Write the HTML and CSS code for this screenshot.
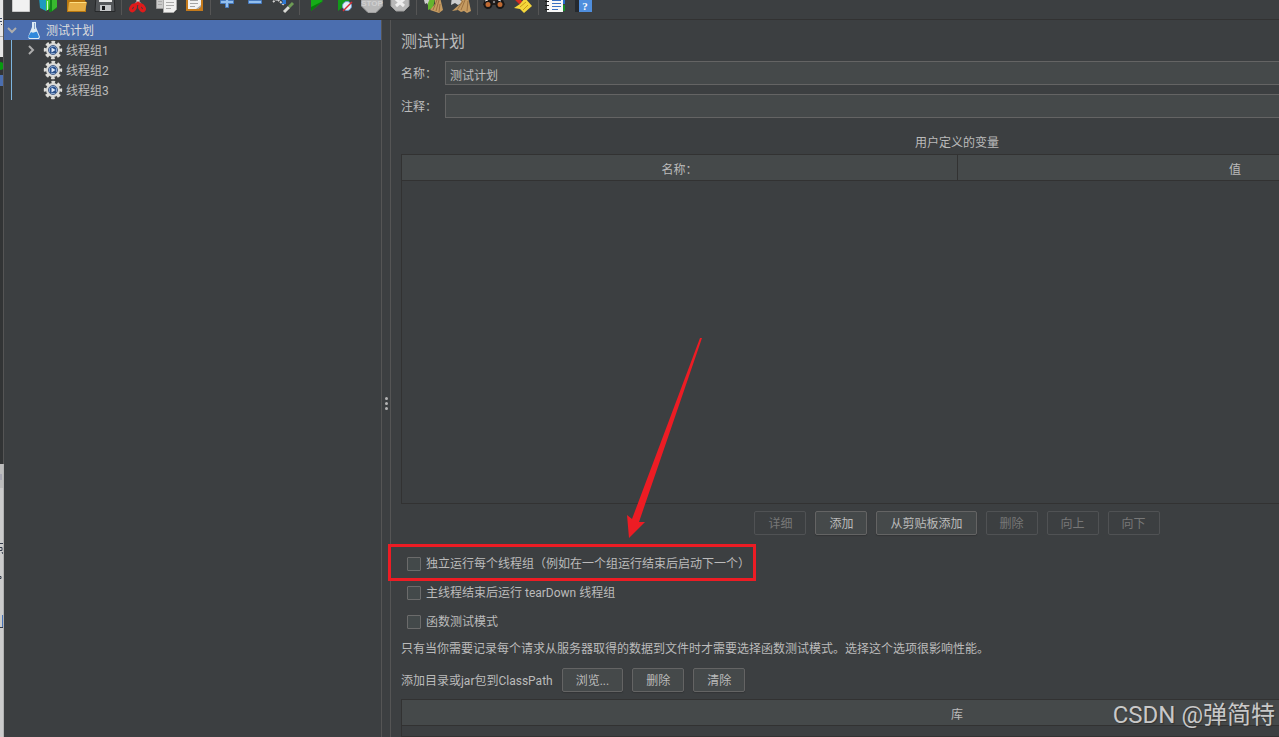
FILE: index.html
```html
<!DOCTYPE html>
<html lang="zh-CN">

<head>
    <meta charset="UTF-8">
    <meta name="viewport" content="width=device-width, initial-scale=1">
    <title>测试计划</title>
    <link rel="stylesheet" href="styles.css">
</head>

<body>
    <!-- shared tree icon -->
    <svg class="defs" width="0" height="0">
        <symbol id="gear" viewBox="0 0 20 20">
            <circle cx="10" cy="10" r="7" fill="#dcdcd9" />
            <circle cx="10" cy="10" r="7.700" fill="none" stroke="#dcdcd9" stroke-width="3" stroke-dasharray="3.500 2.548" stroke-dashoffset="1.750" />
            <circle cx="10" cy="10" r="4.500" fill="#8fb0dc" stroke="#4a5f85" />
            <path fill="#2c528c" d="M7 8a4 4 0 0 1 6 0v5H7z" />
            <path d="M8.500 7.500l4 2.500-4 2.500z" fill="#dfeafa" />
        </symbol>
    </svg>

    <!-- sliver of the window behind -->
    <aside class="behind">
        <svg width="4" height="737" viewBox="0 0 4 737">
            <path fill="#e6e6e6" d="M0 0h4v57H0z" />
            <path fill="#a8a8a8" d="M0 36h4v1H0z" />
            <path stroke="#3c4b68" d="M0 18.500h2M0 21.500h2M1 24.500h1" />
            <path fill="#323435" d="M0 57h4v407H0z" />
            <circle cx="0" cy="66" r="4" fill="#079a10" />
            <path fill="#4b6eaf" d="M0 75h4v11H0z" />
            <path fill="#bdbdbd" d="M0 464h4v24H0z" />
            <path stroke="#9292a8" d="M1 474v6" />
            <path stroke="#303848" fill="none" d="M0 543.500h3M0 547.500h2v3H0M2 552l1 2M0 576.500h1v2H0M0 627.500h3" />
            <path fill="#4773b8" d="M2 615h1v12H2z" />
            <path fill="#555" d="M3 0h1v464H3z" />
            <path fill="#b2b2b2" d="M3 464h1v273H3z" />
        </svg>
    </aside>

    <div class="app">
        <header class="toolbar">
            <button type="button" aria-label="新建"><svg viewBox="0 0 28 20"><path fill="#f1f1f1" stroke="#c9c9c9" d="M5.500-4h17v15.500h-17z" /></svg></button>
            <button type="button" aria-label="模板"><svg viewBox="0 0 28 20"><path fill="#1d9ac0" d="M4-2l7 2v11l-6-3z" /><path fill="#45d136" d="M11 0l5-2v10l-5 3z" /><path fill="#12851a" d="M15 0h7v8l-6 4h-2z" /><path fill="#39b92f" d="M17 0h5v7l-5 4z" /><path stroke="#c6f6d3" d="M12.500 1v9" /></svg></button>
            <button type="button" aria-label="打开"><svg viewBox="0 0 28 20"><path fill="#b87710" d="M4-3h16l3 5v10H4z" /><path fill="#e5ae45" d="M6 2h18l-2 9H5z" /><path stroke="#ffdf82" d="M7 2.500h16" /></svg></button>
            <button type="button" aria-label="保存"><svg viewBox="0 0 28 20"><path fill="#54575a" stroke="#27292b" d="M5-4h18l1 15.500H4z" /><path fill="#e8e8e8" d="M8-4h13v6H8z" /><path fill="#c5c7c9" d="M9 5h11v6H9z" /><path fill="#17191b" d="M11 6h3v4h-3z" /></svg></button>
            <span class="sep"></span>
            <button type="button" aria-label="剪切"><svg viewBox="0 0 28 20"><path stroke="#d6d6d6" stroke-width="2" d="M11-3l6 8M17-3l-6 8" /><g fill="none" stroke="#df1b1b" stroke-width="3"><ellipse cx="9" cy="8" rx="2" ry="3" transform="rotate(35 9 8)" /><ellipse cx="18" cy="8" rx="2" ry="3" transform="rotate(-35 18 8)" /><path d="M11 5l3-2 3 2" /></g></svg></button>
            <button type="button" aria-label="复制"><svg viewBox="0 0 28 20"><path fill="#c9c9c9" stroke="#999" d="M4.500-4h13V8.500h-13z" /><path fill="#efefef" stroke="#aaa" d="M11.500-3h13V9.500l-3 3h-10z" /><path stroke="#aaa" d="M14 2.500h8M14 5.500h8M14 8.500h5M6 4.500h4M6 1.500h4" /></svg></button>
            <button type="button" aria-label="粘贴"><svg viewBox="0 0 28 20"><path fill="#c47a1c" d="M6-4h17v15H6z" /><path fill="#f2f2f2" d="M8-4h13V6l-3 3H8z" /><path stroke="#a4a4a4" d="M10 .500h8M10 3.500h8M10 6.500h5" /><path fill="#a8a8a8" d="M16 9l5-4v2l-3 2z" /></svg></button>
            <span class="sep"></span>
            <button type="button" aria-label="展开"><svg viewBox="0 0 28 20"><path fill="#93bfee" stroke="#477bc0" d="M7.500.500h5V-4h3V.500h5v3h-5v4h-3v-4h-5z" /></svg></button>
            <button type="button" aria-label="折叠"><svg viewBox="0 0 28 20"><path fill="#93bfee" stroke="#477bc0" d="M7.500.500h13v3h-13z" /></svg></button>
            <button type="button" aria-label="切换"><svg viewBox="0 0 28 20"><path fill="none" stroke="#d1d1d1" stroke-width="2" stroke-dasharray="2 1" d="M4 2l4-3 7 6" /><path fill="#2e78d5" d="M12-1l4 1 1-2v6h-5l2-2z" /><path stroke="#d8d9d5" stroke-width="3" d="M15 12l5-5" /><path stroke="#6e9b55" stroke-width="3" d="M20 7l4-4" /></svg></button>
            <span class="sep"></span>
            <button type="button" aria-label="启动"><svg viewBox="0 0 28 20"><path fill="#15ad17" d="M9-8l12 9-12 10z" /><path fill="#087a0c" d="M9 11V7l12-6z" /></svg></button>
            <button type="button" aria-label="不停顿启动"><svg viewBox="0 0 28 20"><path fill="#12981a" d="M8-8l12 9L8 11z" /><circle cx="17" cy="6" r="4.500" fill="#e5f0f7" stroke="#6d9dce" /><path stroke="#d42b34" stroke-width="1.500" d="M13 11l9-9" /></svg></button>
            <button type="button" aria-label="停止"><svg viewBox="0 0 28 20"><path fill="#b8b8b8" stroke="#a0a0a0" d="M3.500-4h21V6L18 12.500h-8L3.500 6z" /><text x="14" y="6" text-anchor="middle" class="stop-text">STOP</text></svg></button>
            <button type="button" aria-label="关闭"><svg viewBox="0 0 28 20"><path fill="#b8b8b8" stroke="#a0a0a0" d="M5-4h18V6l-5 5h-8L5 6z" /><path stroke="#eee" stroke-width="3" d="M10-1l8 7M18-1l-8 7" /></svg></button>
            <span class="sep"></span>
            <button type="button" aria-label="清除"><svg viewBox="0 0 28 20"><path fill="#cecece" d="M4-4h6v3l3 3-4 3-1-2-2 1z" /><path fill="#65b52d" d="M9 3l3-7 4 3-2 9-5 2z" /><path fill="#c59b61" d="M16-3h5l3 13-4 3-9-3 5-6z" /><path stroke="#9b7040" d="M18 0l-4 10M20 0l-3 11M21 4l-1 8" /></svg></button>
            <button type="button" aria-label="清除全部"><svg viewBox="0 0 28 20"><path fill="#cecece" d="M5-4h8v4l3 2-5 3-3-2-4 2z" /><path fill="#c59b61" d="M16-3h5l3 14-4 2-3-2-3 1-3-2-6 1 8-7z" /><path stroke="#9b7040" d="M16 1l-6 9M18 0l-4 10M21 1l-1 10" /></svg></button>
            <span class="sep"></span>
            <button type="button" aria-label="查找"><svg viewBox="0 0 28 20"><path fill="#221e1d" d="M6-3h6l2 4 2-4h6l3 8H3z" /><g fill="#c06a32" stroke="#171717" stroke-width="2"><circle cx="8" cy="4.500" r="3.500" /><circle cx="20" cy="4.500" r="3.500" /></g><path stroke="#ddd" d="M13 2h2M5 1l3-1M18 0l3 1" /></svg></button>
            <button type="button" aria-label="重置查找"><svg viewBox="0 0 28 20"><path stroke="#d32d21" stroke-width="4" d="M8-2l5 5" /><path fill="#f5d73b" d="M17-2l7 8-8 7-4-4-6-1 6-4z" /><path fill="none" stroke="#c69e17" d="M18 2l-6 5M20 5l-5 5" /></svg></button>
            <span class="sep"></span>
            <button type="button" aria-label="函数助手"><svg viewBox="0 0 28 20"><path fill="#f7f7f7" d="M6-4h16v16H6z" /><path fill="#168d29" d="M22 5h2v6h-2z" /><path fill="#276ed0" d="M22-2h2v6h-2z" /><path stroke="#3970c2" d="M11 .500h9M11 3.500h9M11 6.500h9M11 9.500h6" /><path stroke="#191919" d="M4 1.500h4M4 5.500h4M4 9.500h4" /></svg></button>
            <button type="button" aria-label="帮助"><svg viewBox="0 0 28 20"><path fill="#25292e" d="M6-4h5v16H6z" /><path fill="#4f8edd" d="M10-4h13v16H10z" /><text x="16" y="10" text-anchor="middle" class="help-text">?</text></svg></button>
        </header>

        <div class="workspace">
            <nav class="tree">
                <div class="row selected">
                    <svg class="arrow" viewBox="0 0 10 10"><path d="M1 3l4 4 4-4" /></svg>
                    <svg class="flask" viewBox="0 0 16 20"><path fill="#dceaf4" d="M6 2h4v5l4 10-1 2H3l-1-2L6 7z" /><path fill="#2f88dc" d="M5 12c3 2 4-1 6 0l2 5-1 1H4l-2-1z" /><path stroke="#85a3c9" d="M8.500 3v6" fill="none" /></svg>
                    <span>测试计划</span>
                </div>
                <div class="children">
                    <div class="row">
                        <svg class="arrow" viewBox="0 0 10 10"><path d="M3 1l4 4-4 4" /></svg>
                        <svg class="gear"><use href="#gear" /></svg>
                        <span>线程组1</span>
                    </div>
                    <div class="row">
                        <span class="arrow"></span>
                        <svg class="gear"><use href="#gear" /></svg>
                        <span>线程组2</span>
                    </div>
                    <div class="row">
                        <span class="arrow"></span>
                        <svg class="gear"><use href="#gear" /></svg>
                        <span>线程组3</span>
                    </div>
                </div>
            </nav>

            <div class="divider">
                <i></i><i></i><i></i>
            </div>

            <main>
                <div class="plan">
                    <h1>测试计划</h1>
                    <div class="field">
                        <label for="name">名称：</label>
                        <input type="text" id="name" value="测试计划">
                    </div>
                    <div class="field">
                        <label for="comment">注释：</label>
                        <input type="text" id="comment">
                    </div>

                    <h2>用户定义的变量</h2>
                    <div class="table-box variables">
                        <table>
                            <thead>
                                <tr>
                                    <th>名称：</th>
                                    <th>值</th>
                                </tr>
                            </thead>
                        </table>
                    </div>
                    <div class="buttons centered">
                        <button type="button" disabled>详细</button>
                        <button type="button">添加</button>
                        <button type="button">从剪贴板添加</button>
                        <button type="button" disabled>删除</button>
                        <button type="button" disabled>向上</button>
                        <button type="button" disabled>向下</button>
                    </div>

                    <div class="options">
                        <div class="option marked">
                            <input type="checkbox" id="serial">
                            <label for="serial">独立运行每个线程组（例如在一个组运行结束后启动下一个）</label>
                            <svg class="pointer" width="80" height="204" viewBox="0 0 80 204">
                                <path fill="#ed1c24" d="M77 2L14 186l6 0-16 16-2-23 5 4L75 2z" />
                            </svg>
                        </div>
                        <div class="option">
                            <input type="checkbox" id="teardown">
                            <label for="teardown">主线程结束后运行 tearDown 线程组</label>
                        </div>
                        <div class="option">
                            <input type="checkbox" id="functional">
                            <label for="functional">函数测试模式</label>
                        </div>
                    </div>

                    <p>只有当你需要记录每个请求从服务器取得的数据到文件时才需要选择函数测试模式。选择这个选项很影响性能。</p>
                    <div class="buttons classpath">
                        <span>添加目录或jar包到ClassPath</span>
                        <button type="button">浏览...</button>
                        <button type="button">删除</button>
                        <button type="button">清除</button>
                    </div>
                    <div class="table-box library">
                        <table>
                            <thead>
                                <tr>
                                    <th>库</th>
                                </tr>
                            </thead>
                        </table>
                    </div>
                </div>
            </main>
        </div>
    </div>

    <div class="watermark">CSDN @弹简特</div>
</body>

</html>
```

FILE: styles.css
```css
* {
    box-sizing: border-box;
}

body {
    margin: 0;
    height: 100vh;
    display: flex;
    overflow: hidden;
    background-color: #3c3f41;
    color: #bbbbbb;
    font-family: Roboto, "Noto Sans CJK SC", sans-serif;
    font-size: 12px;
    line-height: 20px;
}

button,
input {
    font: inherit;
    color: inherit;
}

svg {
    display: block;
    flex: none;
}

.defs {
    position: absolute;
}

.behind {
    flex: none;
    width: 4px;
    overflow: hidden;
    background-color: #cccccc;
}

.app {
    flex: 1;
    min-width: 0;
    display: flex;
    flex-direction: column;
}

/* toolbar */
.toolbar {
    display: flex;
    flex: none;
    height: 20px;
    padding-left: 3px;
    border-bottom: 1px solid #323232;
    overflow: hidden;
}

.toolbar button {
    flex: none;
    width: 28px;
    padding: 0;
    border: 0;
    background: none;
}

.toolbar svg {
    width: 28px;
    height: 20px;
}

.sep {
    flex: none;
    width: 5px;
    height: 15px;
    background: linear-gradient(#555555, #555555) center / 1px 100% no-repeat;
}

.stop-text {
    font: bold 8px "Liberation Sans", sans-serif;
    fill: #d0d0d0;
}

.help-text {
    font: bold 11px "Liberation Serif", serif;
    fill: #ffffff;
}

/* tree */
.workspace {
    flex: 1;
    min-height: 0;
    display: flex;
}

.tree {
    flex: none;
    width: 378px;
    border-right: 1px solid #555555;
}

.row {
    display: flex;
    align-items: center;
    height: 20px;
    padding-left: 3px;
}

.row span {
    padding-top: 2px;
}

.row.selected {
    background-color: #4b6eaf;
    color: #dddddd;
}

.children {
    margin-left: 7px;
    border-left: 1px solid #7db5e0;
}

.children .row {
    padding-left: 14px;
}

.arrow {
    width: 10px;
    height: 10px;
    fill: none;
    stroke: #adadad;
    stroke-width: 2;
}

.flask {
    width: 16px;
    height: 20px;
    margin: 0 4px 0 9px;
}

.gear {
    width: 20px;
    height: 20px;
    margin: 0 3px 0 7px;
}

.divider {
    flex: none;
    width: 9px;
    display: flex;
    flex-direction: column;
    align-items: center;
    justify-content: center;
    gap: 2px;
    padding-top: 50px;
    border-right: 1px solid #555555;
}

.divider i {
    width: 3px;
    height: 3px;
    border-radius: 50%;
    background-color: #b4b4b4;
}

/* test plan panel */
main {
    flex: 1;
    min-width: 0;
}

.plan {
    display: flex;
    flex-direction: column;
    min-width: 1122px;
    height: 100%;
    padding: 10px 0 0 10px;
}

h1,
h2,
p {
    margin: 0;
    font-weight: normal;
}

h1 {
    font-size: 16px;
    line-height: 24px;
    margin-bottom: 7px;
}

h2 {
    font-size: 12px;
    line-height: 20px;
    margin-top: 6px;
    margin-bottom: 1px;
    text-align: center;
}

.field {
    display: flex;
    align-items: center;
    gap: 8px;
    margin-bottom: 9px;
}

.field label {
    padding-top: 2px;
}

.field input {
    flex: 1;
    height: 24px;
    padding: 2px 4px 0;
    border: 1px solid #646464;
    background-color: #45494a;
    outline: none;
}

.table-box {
    border: 1px solid #323232;
}

.variables {
    flex: none;
    height: 350px;
    margin-bottom: 7px;
}

.library {
    flex: 1;
    margin-top: 7px;
}

table {
    width: 100%;
    table-layout: fixed;
    border-collapse: separate;
    border-spacing: 0;
}

th {
    height: 26px;
    padding: 4px 0 0;
    font-weight: normal;
    background-color: #45494a;
    border-bottom: 1px solid #323232;
}

th + th {
    border-left: 1px solid #323232;
}

.buttons {
    display: flex;
    align-items: center;
    gap: 9px;
}

.buttons.centered {
    justify-content: center;
}

.buttons button {
    height: 24px;
    padding: 2px 13px 0;
    border: 1px solid #646464;
    border-radius: 2px;
    background-color: #45494a;
    line-height: 20px;
    white-space: nowrap;
    box-shadow: 0 1px 1px #323537;
}

.buttons button:disabled {
    border-color: #505254;
    background-color: transparent;
    color: #777777;
    box-shadow: none;
}

.classpath span {
    padding-top: 2px;
}

.options {
    margin: 14px 0 3px;
}

.option {
    position: relative;
    display: flex;
    align-items: center;
    width: fit-content;
    height: 29px;
    gap: 5px;
    padding: 0 6px;
}

.option label {
    padding-top: 1px;
}

.option input {
    appearance: none;
    width: 14px;
    height: 14px;
    margin: 0;
    border: 1px solid #6b6b6b;
    border-radius: 1px;
    background-color: #43494a;
}

p {
    margin-bottom: 9px;
}

/* highlight frame and arrow */
.marked::before {
    content: "";
    position: absolute;
    inset: -5px 0 -3px -13px;
    border: 3px solid #ed1c24;
    pointer-events: none;
}

.pointer {
    position: absolute;
    left: 224px;
    bottom: 38px;
    pointer-events: none;
}

.watermark {
    position: absolute;
    right: 4px;
    bottom: 6px;
    font-family: Roboto, "Noto Sans CJK SC", sans-serif;
    font-size: 24px;
    line-height: 32px;
    color: #c8c8c8;
    text-shadow: 1px 1px 1px #333333;
}
```
